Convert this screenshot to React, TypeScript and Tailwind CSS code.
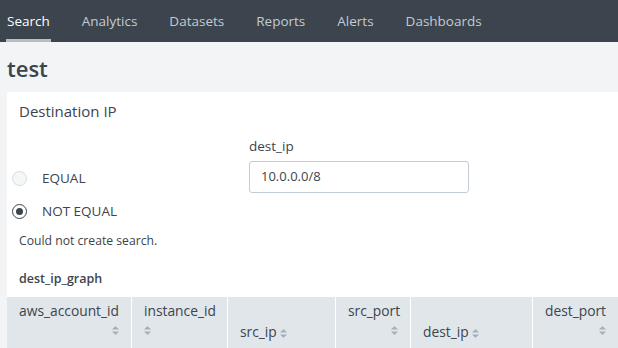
const tabs = ["Search", "Analytics", "Datasets", "Reports", "Alerts", "Dashboards"];

function SortIcon() {
  return (
    <svg className="inline-block w-[7px] h-[9px] align-middle" viewBox="0 0 7 9" fill="#a7b0ba">
      <path d="M3.5 0 L7 3.5 H0 Z" />
      <path d="M3.5 9 L7 5.5 H0 Z" />
    </svg>
  );
}

type Col = { name: string; w: string; num?: boolean; inline?: boolean };

const cols: Col[] = [
  { name: "aws_account_id", w: "w-[124px]", num: true },
  { name: "instance_id", w: "w-[96px]" },
  { name: "src_ip", w: "w-[108px]", inline: true },
  { name: "src_port", w: "w-[75px]", num: true },
  { name: "dest_ip", w: "w-[122px]", inline: true },
  { name: "dest_port", w: "w-[86px]", num: true },
];

export default function App() {
  return (
    <div className="w-[618px] h-[348px] overflow-hidden bg-[#f2f4f5] font-['Open_Sans',sans-serif] text-[#3c444d]">
      {/* top nav */}
      <nav className="h-[42px] bg-[#3c444d] flex pl-[6px]">
        {tabs.map((t, i) => (
          <div
            key={t}
            className={`h-full flex items-center text-[13.5px] border-b-[3px] pt-[3px] ${
              i === 0 ? "text-white border-[#b9bec4] px-[1px] mr-[31px]" : "text-[#c3cbd4] border-transparent mr-[32px]"
            }`}
          >
            {t}
          </div>
        ))}
      </nav>

      {/* title */}
      <h1 className="px-[7px] pt-[12px] h-[50px] text-[22px] font-semibold leading-[28px] text-[#3c444d]">test</h1>

      {/* panel */}
      <div className="ml-[7px] bg-white h-[300px]">
        <div className="px-[12px] pt-[9px] text-[15px] leading-[20px] text-[#3c444d]">Destination IP</div>

        <div className="flex mt-[16px]">
          <div className="w-[242px] pt-[25px] pl-[5px]">
            <label className="flex items-center h-[32px] text-[13.5px]">
              <span className="w-[15px] h-[15px] rounded-full border border-[#d8dde2] bg-[#f4f6f7] mr-[15px]" />
              EQUAL
            </label>
            <label className="flex items-center h-[34px] text-[13.5px]">
              <span className="w-[15px] h-[15px] rounded-full border-[1.5px] border-[#3c444d] bg-white mr-[15px] flex items-center justify-center">
                <span className="w-[7px] h-[7px] rounded-full bg-[#3c444d]" />
              </span>
              NOT EQUAL
            </label>
          </div>
          <div className="flex flex-col">
            <span className="text-[13.5px] leading-[18px]">dest_ip</span>
            <div className="mt-[6px] w-[220px] h-[32px] border border-[#c3cbd4] rounded-[3px] flex items-center px-[11px] text-[13px]">
              10.0.0.0/8
            </div>
          </div>
        </div>

        <p className="px-[12px] mt-[4px] text-[12.2px] text-[#3c444d]">Could not create search.</p>

        <div className="px-[12px] mt-[20px] text-[12.5px] font-semibold leading-[17px]">dest_ip_graph</div>

        <div className="mt-[10px] flex bg-[#e1e6eb] h-[60px]">
          {cols.map((c, i) => (
            <div
              key={c.name}
              className={`${c.w} shrink-0 px-[12px] pt-[6px] text-[13.8px] leading-[15px] ${i > 0 ? "border-l border-white" : ""} ${
                c.num ? "text-right" : "text-left"
              } flex flex-col`}
            >
              {c.inline ? (
                <div className="mt-[21px]">
                  {c.name} <SortIcon />
                </div>
              ) : (
                <>
                  <div>{c.name}</div>
                  <div className="mt-[3px]">
                    <SortIcon />
                  </div>
                </>
              )}
            </div>
          ))}
        </div>
      </div>
    </div>
  );
}
